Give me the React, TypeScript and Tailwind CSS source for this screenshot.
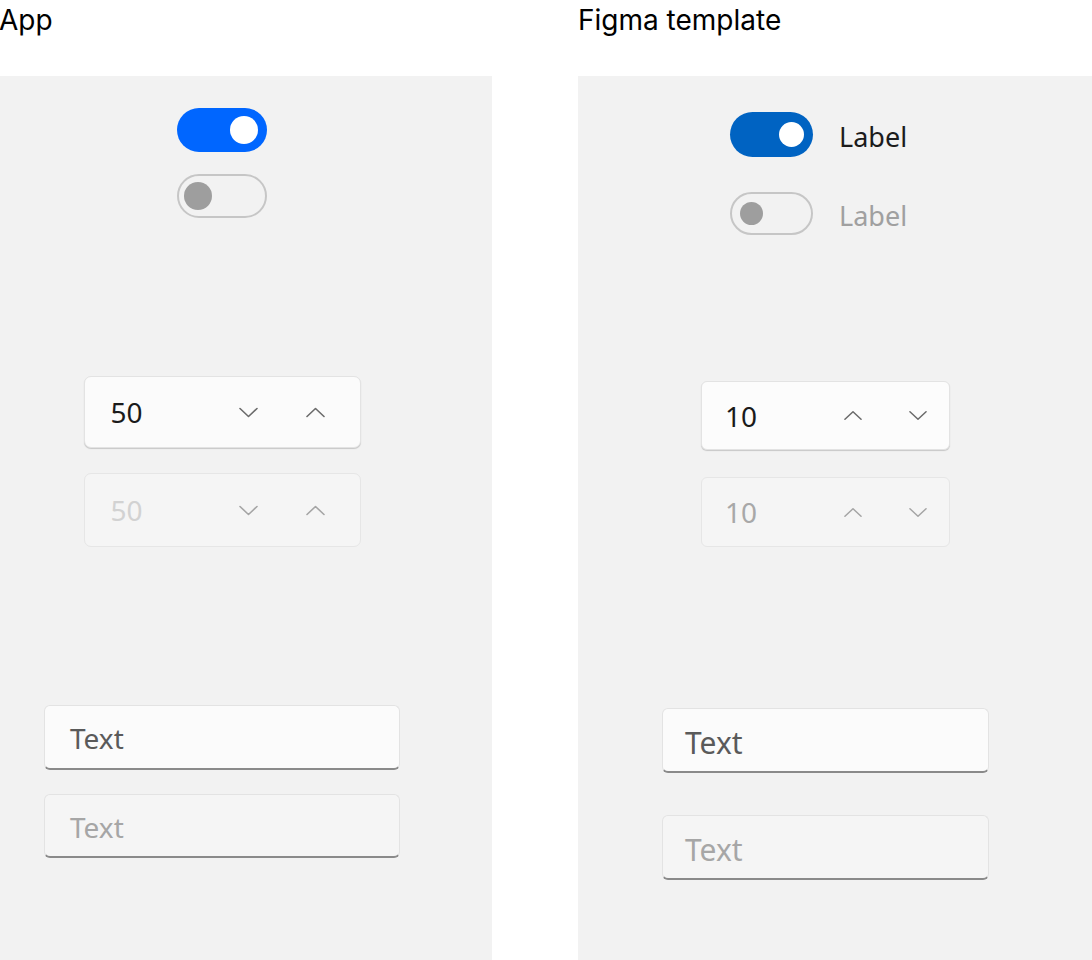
import React from "react";

const segoe = { fontFamily: '"Noto Sans", "Open Sans", Arial, sans-serif' };

function Chevron({ dir, color, w = 19 }: { dir: "up" | "down"; color: string; w?: number }) {
  const h = 11;
  return (
    <svg width={w} height={h} viewBox="0 0 19 11" fill="none">
      {dir === "down" ? (
        <polyline points="1,1.5 9.5,9.5 18,1.5" stroke={color} strokeWidth="1.6" strokeLinecap="round" strokeLinejoin="round" />
      ) : (
        <polyline points="1,9.5 9.5,1.5 18,9.5" stroke={color} strokeWidth="1.6" strokeLinecap="round" strokeLinejoin="round" />
      )}
    </svg>
  );
}

export default function App() {
  return (
    <div className="w-[1092px] h-[960px] bg-white overflow-hidden" style={{ fontFamily: 'Inter, "Noto Sans", sans-serif' }}>
      <div className="flex h-[76px] items-start">
        <div className="w-[579px] text-[28px] leading-[34px] text-black pt-[3px] -ml-[1px]">App</div>
        <div className="text-[28px] leading-[34px] text-black pt-[3px]">Figma template</div>
      </div>
      <div className="flex h-[884px]">
        {/* Left panel */}
        <div className="w-[492px] h-full bg-[#f2f2f2] pl-[44px]" style={segoe}>
          <div className="w-[356px] flex flex-col items-center pt-[32px]">
            <div className="w-[90px] h-[44px] rounded-full bg-[#0066ff] flex items-center justify-end pr-[9px]">
              <div className="w-[28px] h-[28px] rounded-full bg-white" />
            </div>
            <div className="mt-[22px] w-[90px] h-[44px] rounded-full border-2 border-[#c6c6c6] flex items-center pl-[5px]">
              <div className="w-[28px] h-[28px] rounded-full bg-[#9e9e9e]" />
            </div>

            <div className="mt-[158px] w-[277px] h-[72px] rounded-[7px] bg-[#fbfbfb] border border-[#e3e3e3] shadow-[0_1px_1px_rgba(0,0,0,0.18)] flex items-center pl-[26px]">
              <span className="text-[28px] text-[#1a1a1a] w-[128px]">50</span>
              <span><Chevron dir="down" color="#6b6b6b" /></span>
              <span className="ml-[48px]"><Chevron dir="up" color="#6b6b6b" /></span>
            </div>
            <div className="mt-[25px] w-[277px] h-[74px] rounded-[7px] bg-[#f5f5f5] border border-[#e6e6e6] flex items-center pl-[26px]">
              <span className="text-[28px] text-[#d2d2d2] w-[128px]">50</span>
              <span><Chevron dir="down" color="#a5a5a5" /></span>
              <span className="ml-[48px]"><Chevron dir="up" color="#a5a5a5" /></span>
            </div>

            <div className="mt-[158px] w-[356px] h-[65px] rounded-[6px] bg-[#fbfbfb] border border-[#e3e3e3] border-b-2 border-b-[#8a8a8a] flex items-center pl-[25px] pt-[2px]">
              <span className="text-[28px] text-[#5a5a5a]">Text</span>
            </div>
            <div className="mt-[24px] w-[356px] h-[64px] rounded-[6px] bg-[#f5f5f5] border border-[#e3e3e3] border-b-2 border-b-[#8a8a8a] flex items-center pl-[25px] pt-[2px]">
              <span className="text-[28px] text-[#a6a6a6]">Text</span>
            </div>
          </div>
        </div>

        <div className="w-[86px]" />

        {/* Right panel */}
        <div className="flex-1 h-full bg-[#f2f2f2] pl-[84px]" style={segoe}>
          <div className="w-[327px] flex flex-col items-center pt-[36px]">
            <div className="self-start ml-[68px] flex items-center h-[45px]">
              <div className="w-[83px] h-[45px] rounded-full bg-[#0063c2] flex items-center justify-end pr-[9px]">
                <div className="w-[25px] h-[25px] rounded-full bg-white" />
              </div>
              <span className="ml-[26px] h-[45px] pt-[5px] flex items-center text-[27px] text-[#1c1c1c]">Label</span>
            </div>
            <div className="self-start ml-[68px] mt-[35px] flex items-center h-[43px]">
              <div className="w-[83px] h-[43px] rounded-full border-2 border-[#c6c6c6] flex items-center pl-[8px]">
                <div className="w-[23px] h-[23px] rounded-full bg-[#9e9e9e]" />
              </div>
              <span className="ml-[26px] h-[43px] pt-[6px] flex items-center text-[27px] text-[#a0a0a0]">Label</span>
            </div>

            <div className="mt-[146px] w-[249px] h-[69px] rounded-[6px] bg-[#fcfcfc] border border-[#e3e3e3] shadow-[0_1px_1px_rgba(0,0,0,0.18)] flex items-center pl-[23px]">
              <span className="text-[28px] text-[#1a1a1a] w-[119px]">10</span>
              <span><Chevron dir="up" color="#6b6b6b" w={18} /></span>
              <span className="ml-[47px]"><Chevron dir="down" color="#6b6b6b" w={18} /></span>
            </div>
            <div className="mt-[27px] w-[249px] h-[70px] rounded-[6px] bg-[#f5f5f5] border border-[#e6e6e6] flex items-center pl-[23px]">
              <span className="text-[28px] text-[#a8a8a8] w-[119px]">10</span>
              <span><Chevron dir="up" color="#a5a5a5" w={18} /></span>
              <span className="ml-[47px]"><Chevron dir="down" color="#a5a5a5" w={18} /></span>
            </div>

            <div className="mt-[161px] w-[327px] h-[65px] rounded-[6px] bg-[#fbfbfb] border border-[#e3e3e3] border-b-2 border-b-[#8a8a8a] flex items-center pl-[22px] pt-[5px]">
              <span className="text-[30px] text-[#5a5a5a]">Text</span>
            </div>
            <div className="mt-[42px] w-[327px] h-[65px] rounded-[6px] bg-[#f5f5f5] border border-[#e3e3e3] border-b-2 border-b-[#8a8a8a] flex items-center pl-[22px] pt-[5px]">
              <span className="text-[30px] text-[#a6a6a6]">Text</span>
            </div>
          </div>
        </div>
      </div>
    </div>
  );
}
